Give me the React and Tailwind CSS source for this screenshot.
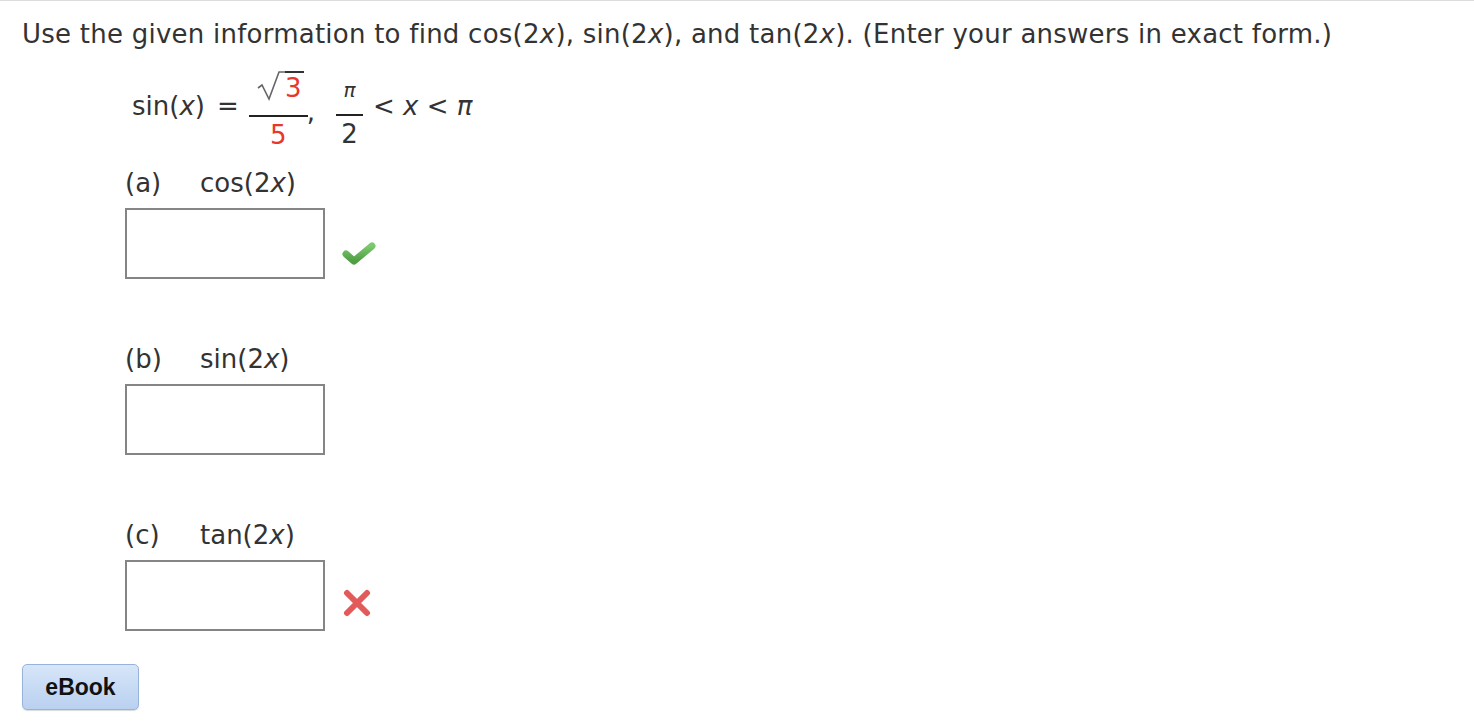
const FONT = { fontFamily: '"DejaVu Sans", Verdana, sans-serif' };

function Check() {
  return (
    <svg width="34" height="24" viewBox="0 0 34 24" className="ml-[17px] mt-[33px]">
      <defs>
        <linearGradient id="chk" x1="0" y1="0" x2="0" y2="1">
          <stop offset="0" stopColor="#7cc96e" />
          <stop offset="1" stopColor="#4f9e44" />
        </linearGradient>
      </defs>
      <path
        d="M4 13 L12 20 L30 5"
        fill="none"
        stroke="url(#chk)"
        strokeWidth="7"
        strokeLinecap="round"
        strokeLinejoin="round"
      />
    </svg>
  );
}

function Cross() {
  return (
    <svg width="30" height="28" viewBox="0 0 30 28" className="ml-[17px] mt-[29px]">
      <path
        d="M5 4 L25 24 M25 4 L5 24"
        fill="none"
        stroke="#e35a5a"
        strokeWidth="6"
        strokeLinecap="round"
      />
    </svg>
  );
}

function Part({ label, fn, mark, first }) {
  return (
    <div className={first ? "mt-[22px]" : "mt-[65px]"}>
      <div className="flex h-[30px] items-center leading-[30px] whitespace-nowrap">
        <span className="w-[75px]">({label})</span>
        <span>
          {fn}(2<i>x</i>)
        </span>
      </div>
      <div className="mt-[10px] flex items-start">
        <div className="h-[71px] w-[200px] border-2 border-[#858585] bg-white" />
        {mark === "ok" && <Check />}
        {mark === "bad" && <Cross />}
      </div>
    </div>
  );
}

export default function App() {
  return (
    <div className="min-h-screen bg-white text-[#333] text-[26px]" style={FONT}>
      <div className="border-t border-[#dcdcdc] pl-[22px] pt-[18px]">
        <p className="whitespace-nowrap leading-[30px] tracking-[0.24px]">
          Use the given information to find cos(2<i>x</i>), sin(2<i>x</i>), and tan(2<i>x</i>). (Enter your answers in exact form.)
        </p>

        {/* sin(x) = sqrt3/5, pi/2 < x < pi */}
        <div className="ml-[110px] mt-[21px] flex h-[76px] items-start whitespace-nowrap leading-[30px]">
          <span className="mt-[21px]">
            sin(<i>x</i>)
          </span>
          <span className="ml-[12px] mt-[21px]">=</span>
          <div className="ml-[10px] flex w-[59px] flex-col items-center">
            <div className="flex h-[31px] items-end pl-[4px]">
              <svg width="33" height="31" viewBox="0 0 33 31" className="-mr-[1px]">
                <path d="M1 18 L5 15 L12 29 L22 2 L33 2" fill="none" stroke="#666" strokeWidth="1.6" />
              </svg>
              <span className="-ml-[4px] border-t-2 border-[#333] pr-[2px] pt-[2px] text-[#e8382c] leading-[26px]">3</span>
            </div>
            <div className="mt-[14px] h-[2px] w-full bg-[#222]" />
            <span className="mt-[3px] text-[#e8382c]">5</span>
          </div>
          <span className="mt-[27px] -ml-[1px]">,</span>
          <div className="ml-[21px] flex w-[27px] flex-col items-center">
            <span className="mt-[2px] h-[42px] text-[20px] italic leading-[36px]">π</span>
            <div className="h-[2px] w-full bg-[#222]" />
            <span className="mt-[3px]">2</span>
          </div>
          <span className="ml-[10px] mt-[21px]">
            &lt; <i>x</i> &lt; <i>π</i>
          </span>
        </div>

        <div className="ml-[103px]">
          <Part label="a" fn="cos" mark="ok" first />
          <Part label="b" fn="sin" />
          <Part label="c" fn="tan" mark="bad" />
        </div>

        <button
          className="mt-[33px] flex h-[46px] w-[117px] items-center justify-center rounded-[5px] border border-[#97b3da] bg-gradient-to-b from-[#d7e6f9] to-[#b9d0ef] text-[23px] font-bold text-[#111] shadow-[0_1px_1px_rgba(0,0,0,0.15)]"
          style={{ fontFamily: '"Liberation Sans", Arial, sans-serif' }}
        >
          eBook
        </button>
      </div>
    </div>
  );
}
